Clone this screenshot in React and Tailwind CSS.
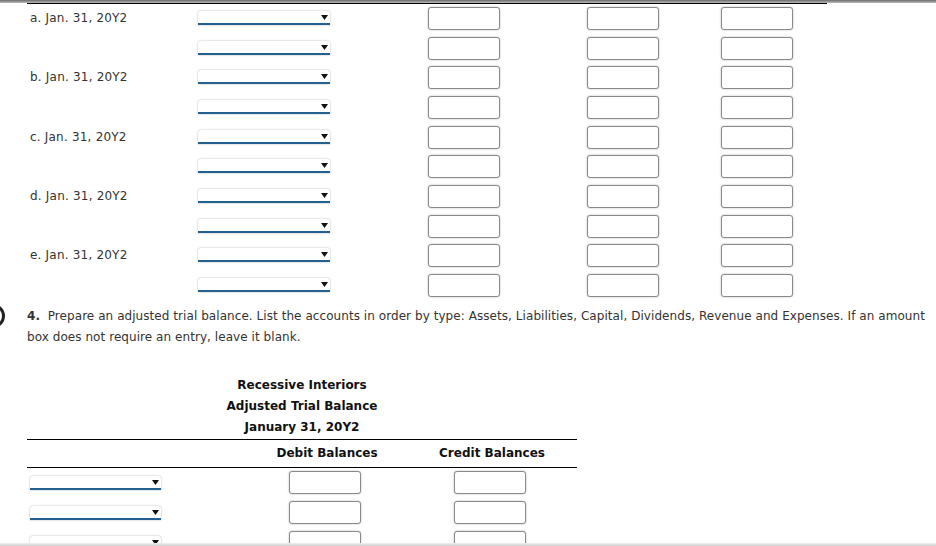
import React from "react";

const font = { fontFamily: '"DejaVu Sans", Verdana, sans-serif' };

function Select({ w = "w-[132px]" }) {
  return (
    <div className={`relative ${w} h-[14px] rounded-t-[3px] bg-white shadow-[0_0_2px_rgba(0,0,0,0.35)] border-b-[2px] border-[#22608f]`}>
      <svg className="absolute right-[2px] top-[4px]" width="7" height="5" viewBox="0 0 7 5">
        <polygon points="0,0 7,0 3.5,5" fill="#111" />
      </svg>
    </div>
  );
}

function Box() {
  return (
    <div className="w-[72px] h-[23px] rounded-[3px] border border-[#8a8a8a] bg-white shadow-[0_0_2px_rgba(0,0,0,0.3)]" />
  );
}

const labels = ["a. Jan. 31, 20Y2", "", "b. Jan. 31, 20Y2", "", "c. Jan. 31, 20Y2", "", "d. Jan. 31, 20Y2", "", "e. Jan. 31, 20Y2", ""];

export default function App() {
  return (
    <div className="relative w-[936px] h-[546px] overflow-hidden bg-white text-[#333]" style={font}>
      <div className="h-[3px] bg-gradient-to-b from-[#6b6b6b] to-[#bdbdbd]" />
      <div className="ml-[27px] w-[800px] h-px bg-black" />
      <div className="flex flex-col pt-[3px]">
        {labels.map((l, i) => (
          <div key={i} className="flex items-start h-[29.67px]">
            <div className="w-[198px] pl-[30px] pt-[4px] text-[12px] leading-[14px] tracking-[0.2px]">{l}</div>
            <div className="w-[230px] pt-[4px]"><Select /></div>
            <div className="w-[159px]"><Box /></div>
            <div className="w-[134px]"><Box /></div>
            <div><Box /></div>
          </div>
        ))}
      </div>
      <div className="absolute left-[-19px] top-[304px] w-[24px] h-[24px] rounded-full border-[3px] border-[#222]" />
      <div className="pl-[27px] pt-[2px] text-[12px] leading-[21px] whitespace-nowrap tracking-[0.06px]">
        <b>4.</b>&nbsp; Prepare an adjusted trial balance. List the accounts in order by type: Assets, Liabilities, Capital, Dividends, Revenue and Expenses. If an amount
        <br />box does not require an entry, leave it blank.
      </div>
      <div className="ml-[27px] mt-[27px] w-[550px]">
        <div className="w-[550px] text-center font-bold text-[12px] leading-[21px] text-[#111]">
          <div>Recessive Interiors</div>
          <div>Adjusted Trial Balance</div>
          <div>January 31, 20Y2</div>
        </div>
        <div className="mt-[1px] h-px bg-black" />
        <div className="flex h-[27px] items-center font-bold text-[12px] text-[#111] whitespace-nowrap">
          <div className="w-[250px]" />
          <div className="w-[100px] flex justify-center">Debit Balances</div>
          <div className="w-[65px]" />
          <div className="w-[100px] flex justify-center">Credit Balances</div>
        </div>
        <div className="h-px bg-black" />
        <div className="flex flex-col pt-[3px]">
          {[0, 1, 2].map((i) => (
            <div key={i} className="flex items-start h-[30px]">
              <div className="w-[262px] pl-[3px] pt-[5px]"><Select w="w-[131px]" /></div>
              <div className="w-[165px]"><Box /></div>
              <div><Box /></div>
            </div>
          ))}
        </div>
      </div>
      <div className="absolute left-0 right-0 bottom-0 h-[3px] bg-gradient-to-b from-[#f0f0f0] to-[#d0d0d0]" />
    </div>
  );
}
